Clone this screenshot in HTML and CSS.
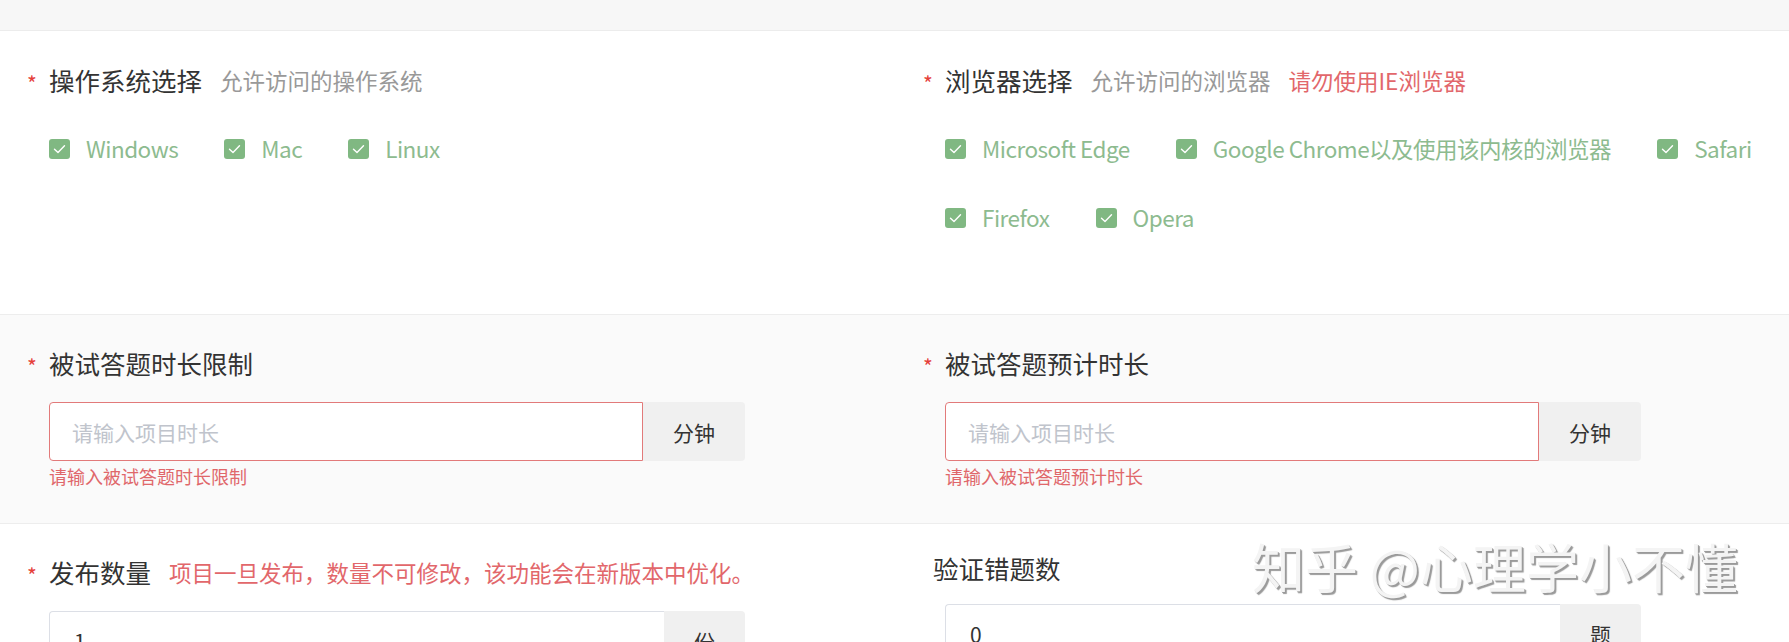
FILE: index.html
```
<!DOCTYPE html>
<html lang="zh-CN">
<head>
<meta charset="utf-8">
<title>项目设置</title>
<link rel="stylesheet" href="styles.css">
</head>
<body>
<div class="topbar"></div>

<section class="row row-sys">
  <div class="col">
    <div class="label-line"><span class="req">*</span><span class="label">操作系统选择</span><span class="hint">允许访问的操作系统</span></div>
    <div class="checks">
      <label class="check"><span class="box"><svg viewBox="0 0 21 20" width="21" height="20"><path d="M5.5 10.2 L9 13.6 L15.5 6.8" fill="none" stroke="#fff" stroke-width="1.4" stroke-linecap="round" stroke-linejoin="round"/></svg></span>Windows</label>
      <label class="check"><span class="box"><svg viewBox="0 0 21 20" width="21" height="20"><path d="M5.5 10.2 L9 13.6 L15.5 6.8" fill="none" stroke="#fff" stroke-width="1.4" stroke-linecap="round" stroke-linejoin="round"/></svg></span>Mac</label>
      <label class="check"><span class="box"><svg viewBox="0 0 21 20" width="21" height="20"><path d="M5.5 10.2 L9 13.6 L15.5 6.8" fill="none" stroke="#fff" stroke-width="1.4" stroke-linecap="round" stroke-linejoin="round"/></svg></span>Linux</label>
    </div>
  </div>
  <div class="col">
    <div class="label-line"><span class="req">*</span><span class="label">浏览器选择</span><span class="hint">允许访问的浏览器</span><span class="warn">请勿使用IE浏览器</span></div>
    <div class="checks">
      <label class="check"><span class="box"><svg viewBox="0 0 21 20" width="21" height="20"><path d="M5.5 10.2 L9 13.6 L15.5 6.8" fill="none" stroke="#fff" stroke-width="1.4" stroke-linecap="round" stroke-linejoin="round"/></svg></span>Microsoft Edge</label>
      <label class="check"><span class="box"><svg viewBox="0 0 21 20" width="21" height="20"><path d="M5.5 10.2 L9 13.6 L15.5 6.8" fill="none" stroke="#fff" stroke-width="1.4" stroke-linecap="round" stroke-linejoin="round"/></svg></span>Google Chrome以及使用该内核的浏览器</label>
      <label class="check"><span class="box"><svg viewBox="0 0 21 20" width="21" height="20"><path d="M5.5 10.2 L9 13.6 L15.5 6.8" fill="none" stroke="#fff" stroke-width="1.4" stroke-linecap="round" stroke-linejoin="round"/></svg></span>Safari</label>
      <label class="check"><span class="box"><svg viewBox="0 0 21 20" width="21" height="20"><path d="M5.5 10.2 L9 13.6 L15.5 6.8" fill="none" stroke="#fff" stroke-width="1.4" stroke-linecap="round" stroke-linejoin="round"/></svg></span>Firefox</label>
      <label class="check"><span class="box"><svg viewBox="0 0 21 20" width="21" height="20"><path d="M5.5 10.2 L9 13.6 L15.5 6.8" fill="none" stroke="#fff" stroke-width="1.4" stroke-linecap="round" stroke-linejoin="round"/></svg></span>Opera</label>
    </div>
  </div>
</section>

<section class="row row-time">
  <div class="col">
    <div class="label-line"><span class="req">*</span><span class="label">被试答题时长限制</span></div>
    <div class="group">
      <div class="field error"><span class="placeholder">请输入项目时长</span></div>
      <div class="append">分钟</div>
    </div>
    <div class="err-msg">请输入被试答题时长限制</div>
  </div>
  <div class="col">
    <div class="label-line"><span class="req">*</span><span class="label">被试答题预计时长</span></div>
    <div class="group">
      <div class="field error"><span class="placeholder">请输入项目时长</span></div>
      <div class="append">分钟</div>
    </div>
    <div class="err-msg">请输入被试答题预计时长</div>
  </div>
</section>

<section class="row row-count">
  <div class="col col-count">
    <div class="label-line"><span class="req">*</span><span class="label">发布数量</span><span class="warn">项目一旦发布，数量不可修改，该功能会在新版本中优化。</span></div>
    <div class="group">
      <div class="field"><span class="value">1</span></div>
      <div class="append narrow">份</div>
    </div>
  </div>
  <div class="col col-verify">
    <div class="label-line plain"><span class="label">验证错题数</span></div>
    <div class="group">
      <div class="field"><span class="value">0</span></div>
      <div class="append narrow">题</div>
    </div>
  </div>
</section>

<div class="watermark">知乎 @心理学小不懂</div>
</body>
</html>
```

FILE: styles.css
```
html, body {
  margin: 0;
  padding: 0;
  overflow: hidden;
  background: #ffffff;
}
body {
  font-family: "Noto Sans CJK SC", "Microsoft YaHei", sans-serif;
  color: #333333;
  position: relative;
  height: 642px;
}
.topbar {
  height: 30px;
  background: #f7f7f7;
  border-bottom: 1px solid #ececec;
}
.row {
  display: grid;
  grid-template-columns: 896px 1fr;
  border-bottom: 1px solid #ededed;
}
.col {
  padding-left: 27px;
}
.row-sys .col {
  padding-top: 31px;
  padding-bottom: 79px;
}
.row-time {
  background: #fafafa;
}
.row-time .col {
  padding-top: 30px;
  padding-bottom: 35px;
}
.row-count {
  border-bottom: none;
}
.col-count {
  padding-top: 30px;
}
.col-verify {
  padding-top: 26px;
}
.label-line {
  display: flex;
  align-items: center;
  height: 36px;
  white-space: nowrap;
}
.req {
  width: 22px;
  flex: none;
  color: #e5403a;
  font-size: 21px;
  line-height: 36px;
  padding-top: 6px;
  box-sizing: border-box;
}
.label {
  font-size: 25.5px;
  color: #333333;
  line-height: 36px;
}
.plain .label {
  margin-left: 10px;
}
.hint {
  font-size: 22.5px;
  color: #999999;
  margin-left: 18px;
  line-height: 36px;
}
.warn {
  font-size: 22.5px;
  color: #e2676b;
  margin-left: 18px;
  line-height: 36px;
}
.checks {
  display: flex;
  flex-wrap: wrap;
  column-gap: 46px;
  row-gap: 32px;
  margin-top: 31px;
  margin-left: 22px;
}
.check {
  display: flex;
  align-items: center;
  gap: 16px;
  height: 37px;
  font-size: 22.5px;
  letter-spacing: -0.5px;
  color: #8dbb8f;
  white-space: nowrap;
}
.box {
  width: 21px;
  height: 20px;
  background: #80b882;
  border-radius: 3px;
  display: block;
  flex: none;
  margin-top: 2px;
}
.box svg {
  display: block;
}
.group {
  display: flex;
  width: 696px;
  height: 59px;
  margin-left: 22px;
  margin-top: 21px;
}
.col-count .group {
  margin-top: 21px;
}
.col-verify .group {
  margin-top: 18px;
}
.field {
  flex: 1;
  box-sizing: border-box;
  border: 1px solid #dcdfe6;
  border-right: none;
  border-radius: 4px 0 0 4px;
  background: #ffffff;
  display: flex;
  align-items: center;
  padding-left: 24px;
}
.field.error {
  border: 1px solid #e27a7a;
  padding-left: 22px;
}
.placeholder {
  font-size: 21px;
  color: #c0c4cc;
}
.value {
  font-size: 21px;
  color: #333333;
}
.append {
  width: 102px;
  flex: none;
  background: #f0f0f0;
  border-radius: 0 4px 4px 0;
  display: flex;
  align-items: center;
  justify-content: center;
  font-size: 21px;
  color: #333333;
}
.append.narrow {
  width: 81px;
}
.err-msg {
  margin-left: 22px;
  margin-top: 3px;
  font-size: 18px;
  line-height: 24px;
  color: #e0676a;
}
.watermark {
  position: absolute;
  left: 1252px;
  top: 531px;
  font-size: 53px;
  line-height: 70px;
  font-weight: 400;
  color: #f4f4f4;
  white-space: nowrap;
  text-shadow: 2px 2px 1px #9a9a9a, 1px 1px 0 #b0b0b0;
}
```
